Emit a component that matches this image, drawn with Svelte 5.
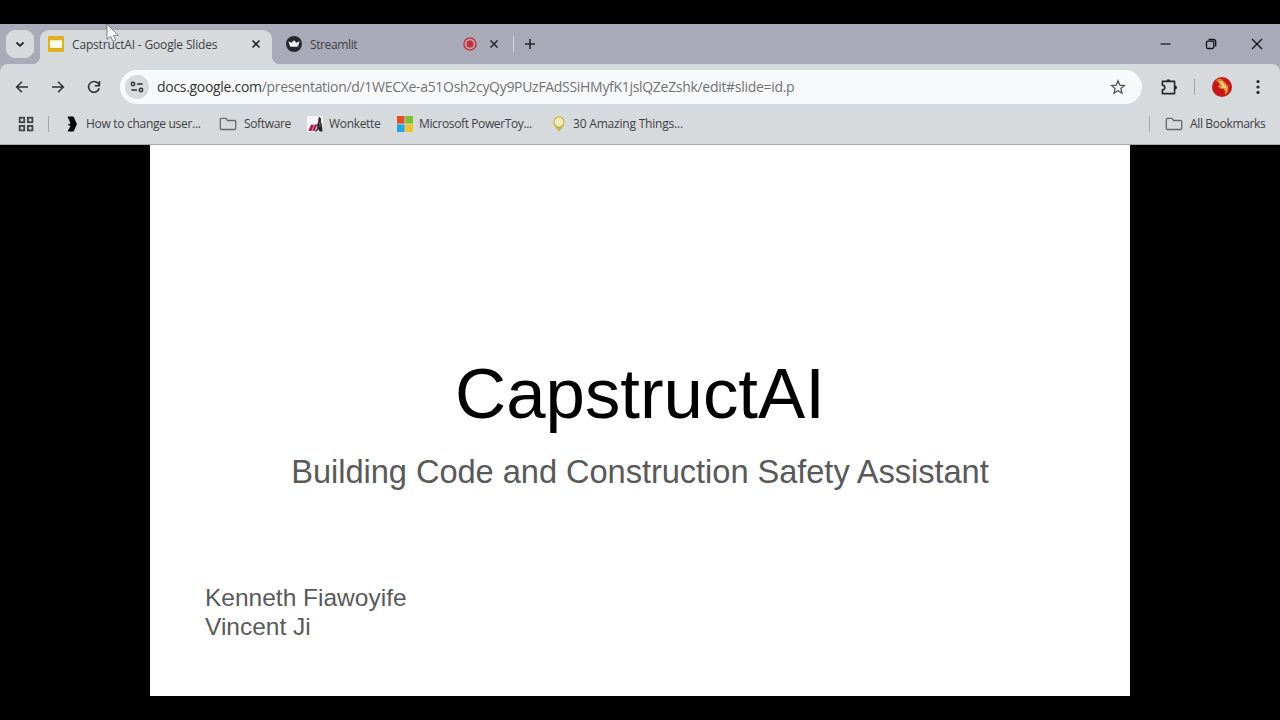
<script lang='ts'>
  const host = 'docs.google.com'
  const path = '/presentation/d/1WECXe-a51Osh2cyQy9PUzFAdSSiHMyfK1jslQZeZshk/edit#slide=id.p'

  const bookmarks = [
    { icon: 'chevron', label: 'How to change user...', width: 153, tracking: -0.29 },
    { icon: 'folder', label: 'Software', width: 88, tracking: -0.35 },
    { icon: 'wonkette', label: 'Wonkette', width: 90, tracking: -0.32 },
    { icon: 'microsoft', label: 'Microsoft PowerToy...', width: 156, tracking: -0.38 },
    { icon: 'pin', label: '30 Amazing Things...', width: 140, tracking: -0.2 }
  ]

  const authors = ['Kenneth Fiawoyife', 'Vincent Ji']
</script>

{#snippet folder()}
  <svg width='18' height='16' viewBox='0 0 18 16'>
    <path d='M2.5 2.4h4.3l1.8 2.1h6.9q1.2 0 1.2 1.2v6.6q0 1.2-1.2 1.2h-13q-1.2 0-1.2-1.2V3.6q0-1.2 1.2-1.2z' fill='none' stroke='#65686b' stroke-width='1.3' />
  </svg>
{/snippet}

{#snippet cross()}
  <svg width='12' height='12' viewBox='0 0 12 12'>
    <path d='M2.5 2.5l7 7m0-7l-7 7' stroke='#25282b' stroke-width='1.6' />
  </svg>
{/snippet}

<div class='screen'>
  <header class='tabs'>
    <div class='search-slot'>
      <button class='tab-search' aria-label='Search tabs'>
        <svg width='12' height='12' viewBox='0 0 12 12'><path d='M2.5 4.5l3.5 3.3 3.5-3.3' fill='none' stroke='#202326' stroke-width='1.8' /></svg>
      </button>
    </div>
    <div class='tab active'>
      <svg class='favicon' width='16' height='16' viewBox='0 0 16 16'>
        <rect width='16' height='16' rx='1.5' fill='#e2b01f' />
        <rect x='2' y='4.3' width='12' height='7.5' fill='#fffef0' />
      </svg>
      <span class='title'>CapstructAI - Google Slides</span>
      {@render cross()}
    </div>
    <div class='tab second'>
      <svg class='favicon' width='16' height='16' viewBox='0 0 16 16'>
        <circle cx='8' cy='8' r='8' fill='#242831' />
        <path d='M2.4 5.2l3.1 1.5L8 4.3l2.5 2.4 3.1-1.5-1.5 4.8q-.3.7-1 .7H4.9q-.7 0-1-.7z' fill='#eff0f1' />
      </svg>
      <span class='title'>Streamlit</span>
      <svg class='recording' width='14' height='14' viewBox='0 0 14 14'>
        <circle cx='7' cy='7' r='6.1' fill='none' stroke='#cf2836' stroke-width='1.3' />
        <circle cx='7' cy='7' r='3.5' fill='#cf2836' />
      </svg>
      {@render cross()}
    </div>
    <i class='rule light'></i>
    <svg class='new-tab' width='12' height='12' viewBox='0 0 12 12'><path d='M6 1v10M1 6h10' stroke='#25282b' stroke-width='1.6' /></svg>
    <div class='window-controls'>
      <svg width='12' height='12' viewBox='0 0 12 12'><path d='M1.5 6h10' stroke='#111' stroke-width='1.2' /></svg>
      <svg width='12' height='12' viewBox='0 0 12 12' fill='none' stroke='#111' stroke-width='1.3'>
        <rect x='1.5' y='3.2' width='7.3' height='7.3' rx='1.5' />
        <path d='M3.6 1.5h4.7q2.4 0 2.4 2.4v4.5' />
      </svg>
      <svg width='12' height='12' viewBox='0 0 12 12'><path d='M1 1l10 10M11 1L1 11' stroke='#111' stroke-width='1.3' /></svg>
    </div>
  </header>

  <div class='toolbar'>
    <nav class='navigation'>
      <svg width='16' height='16' viewBox='0 0 16 16'><path d='M14 8H3m5-5.3L2.7 8 8 13.3' fill='none' stroke='#303336' stroke-width='1.6' /></svg>
      <svg width='16' height='16' viewBox='0 0 16 16'><path d='M2 8h11M8 2.7L13.3 8 8 13.3' fill='none' stroke='#303336' stroke-width='1.6' /></svg>
      <svg width='16' height='16' viewBox='0 0 16 16'>
        <path d='M13.2 9.2A5.4 5.4 0 1 1 12 4.3l1.6 1.8' fill='none' stroke='#303336' stroke-width='1.6' />
        <path d='M13.4 1.9v4.8H8.8' fill='none' stroke='#303336' stroke-width='1.6' />
      </svg>
    </nav>
    <div class='address'>
      <span class='site-info'>
        <svg width='14' height='14' viewBox='0 0 14 14' fill='none' stroke='#303336' stroke-width='1.5'>
          <circle cx='3' cy='4' r='1.7' />
          <path d='M7 4h5.7M1.3 10H7' />
          <circle cx='11' cy='10' r='1.7' />
        </svg>
      </span>
      <span class='url'>{host}<span>{path}</span></span>
      <svg class='star' width='16' height='16' viewBox='0 0 16 16'>
        <path d='M8 1.8l1.8 4.3 4.7.4-3.6 3.1 1.1 4.5L8 11.7l-4 2.4 1.1-4.5-3.6-3.1 4.7-.4z' fill='none' stroke='#505356' stroke-width='1.3' />
      </svg>
    </div>
    <svg class='extensions' width='18' height='18' viewBox='0 0 18 18'>
      <path d='M2.4 3.4h12.2v12.2H2.4v-3.7q2.4-.2 2.4-2.4T2.4 7.1z' fill='none' stroke='#25282b' stroke-width='1.6' stroke-linejoin='round' />
      <path d='M6.5 3.2a2 2 0 0 1 4 0zM15 7.5a2 2 0 0 1 0 4z' fill='#25282b' />
    </svg>
    <i class='rule toolbar-rule'></i>
    <svg class='avatar' width='20' height='20' viewBox='0 0 20 20'>
      <circle cx='10' cy='10' r='10' fill='#c51619' />
      <path d='M4 3.2Q7 .6 10.4 2.6L13.5 6l3 3.3-.3 5.4-3 3.3q.2-4.3-2-6.2L8.8 12 6 9.6l1.8-2.3z' fill='#df812c' />
      <path d='M6.6 4l3.6.6 4.2 5.2.4 4.8-2.6-4-3.4.6 1.3-2.9z' fill='#f3d184' />
    </svg>
    <svg class='menu' width='4' height='16' viewBox='0 0 4 16' fill='#25282b'>
      <circle cx='2' cy='2.6' r='1.6' /><circle cx='2' cy='8' r='1.6' /><circle cx='2' cy='13.4' r='1.6' />
    </svg>
  </div>

  <div class='bookmarks'>
    <svg class='apps' width='16' height='16' viewBox='0 0 16 16' fill='none' stroke='#404346' stroke-width='1.8'>
      <rect x='1.7' y='1.7' width='4.5' height='4.5' /><rect x='9.9' y='1.7' width='4.5' height='4.5' />
      <rect x='1.7' y='9.9' width='4.5' height='4.5' /><rect x='9.9' y='9.9' width='4.5' height='4.5' />
    </svg>
    <i class='rule'></i>
    <div class='links'>
      {#each bookmarks as bookmark}
        <div class='bookmark {bookmark.icon}' style:width='{bookmark.width}px'>
          {#if bookmark.icon === 'folder'}
            {@render folder()}
          {:else if bookmark.icon === 'chevron'}
            <svg width='12' height='16' viewBox='0 0 12 16'><path d='M1.5.5h6L10.9 8l-3.2 7.5H1.5L4.5 10 1.5 8.7l3-1.2z' fill='#050505' /></svg>
          {:else if bookmark.icon === 'wonkette'}
            <svg width='16' height='16' viewBox='0 0 16 16'>
              <rect width='16' height='16' fill='#f4f3f5' />
              <path d='M4 8.7h3L4.4 15H1.4zM7.8 8.4h2.6l-2.6 6.4H5z' fill='#a91846' />
              <path d='M10.2 8.5l1-3 .2-3 1-1.7 1.6 1.7-.1 3.7 1 2.3.7 7h-3.2l-.7-2.2-2.2 2.2H7.6l2.6-3z' fill='#292529' />
              <path d='M12.3 6.5l.8 2.4-.3 2' stroke='#a69ca2' fill='none' stroke-width='.7' />
            </svg>
          {:else if bookmark.icon === 'microsoft'}
            <svg width='16' height='16' viewBox='0 0 16 16'>
              <path d='M0 0h7.6v7.6H0z' fill='#e34d2d' /><path d='M8.4 0H16v7.6H8.4z' fill='#79c32a' />
              <path d='M0 8.4h7.6V16H0z' fill='#25a6df' /><path d='M8.4 8.4H16V16H8.4z' fill='#edc52a' />
            </svg>
          {:else}
            <svg width='12' height='16' viewBox='0 0 12 16'>
              <path d='M6 .3a5.7 5.7 0 0 1 5.7 5.8Q11.7 9 9 12L6 15.8 3 12Q.3 9 .3 6.1A5.7 5.7 0 0 1 6 .3z' fill='#c1b947' />
              <circle cx='6' cy='6' r='4.4' fill='#f2edc5' />
              <path d='M3 4l2 1.5L7 3l2 2-2 3-2-1' fill='none' stroke='#e6dfa8' />
            </svg>
          {/if}
          <span style:letter-spacing='{bookmark.tracking}px'>{bookmark.label}</span>
        </div>
      {/each}
    </div>
    <i class='rule'></i>
    <div class='all'>{@render folder()}<span>All Bookmarks</span></div>
  </div>

  <main>
    <section class='slide'>
      <h1>CapstructAI</h1>
      <h2>Building Code and Construction Safety Assistant</h2>
      <div class='authors'>
        {#each authors as author}
          <p>{author}</p>
        {/each}
      </div>
    </section>
  </main>

  <svg class='cursor' width='14' height='20' viewBox='0 0 14 20'>
    <path d='M1 1v15.4l3.6-3.1 2.4 5 2.6-1.2-2.3-4.8h4.9z' fill='#fff' stroke='#65666c' stroke-width='.8' />
  </svg>
</div>

<style>
  :global(body) {
    background: #000;
    overflow: hidden;
  }
  .screen {
    position: relative;
    box-sizing: border-box;
    width: 1280px;
    height: 720px;
    padding-top: 24px;
    background: #000;
    color: #3d4043;
    font: 12px/16px 'Open Sans', 'Noto Sans', sans-serif;
  }
  svg {
    display: block;
    flex: none;
  }
  span {
    white-space: nowrap;
  }
  .tabs {
    display: flex;
    align-items: center;
    height: 40px;
    background: #a8abb7;
  }
  .search-slot {
    align-self: stretch;
    width: 40px;
    box-sizing: border-box;
    padding: 6px;
    background: radial-gradient(circle at 0 0, transparent 8px, #d7dadd 8.5px) right bottom / 8px 8px no-repeat;
  }
  .tab-search {
    display: grid;
    place-items: center;
    width: 28px;
    height: 28px;
    padding: 0;
    border: 0;
    border-radius: 9px;
    background: #d7dadd;
  }
  .tab {
    display: flex;
    align-items: center;
    box-sizing: border-box;
  }
  .favicon {
    margin-right: 8px;
  }
  .title {
    flex: 1;
    padding-top: 2px;
    letter-spacing: -.17px;
  }
  .active {
    align-self: flex-end;
    width: 232px;
    height: 34px;
    padding: 0 10px 6px 8px;
    border-radius: 9px 9px 0 0;
    background: #d7dadd;
  }
  .second {
    width: 240px;
    height: 40px;
    padding: 0 12px 0 14px;
    background: radial-gradient(circle at 100% 0, transparent 8px, #d7dadd 8.5px) left bottom / 8px 8px no-repeat;
  }
  .second .title {
    letter-spacing: -.38px;
  }
  .recording {
    margin-right: 11px;
  }
  .rule {
    width: 1px;
    height: 16px;
    background: #a4a6aa;
  }
  .light {
    margin-left: 1px;
    background: #d8dae0;
  }
  .new-tab {
    margin-left: 10px;
  }
  .window-controls {
    display: flex;
    gap: 34px;
    margin-left: auto;
    padding-right: 17px;
  }
  .toolbar {
    display: flex;
    align-items: center;
    box-sizing: border-box;
    height: 46px;
    padding: 0 20px 0 14px;
    border-radius: 8px 8px 0 0;
    background: #d7dadd;
    box-shadow: 0 -8px 0 #a8abb7;
  }
  .navigation {
    display: flex;
    gap: 20px;
    width: 106px;
  }
  .address {
    display: flex;
    align-items: center;
    box-sizing: border-box;
    width: 1022px;
    height: 34px;
    padding: 0 16px 0 5px;
    border-radius: 17px;
    background: #f8f9fa;
  }
  .site-info {
    display: grid;
    place-items: center;
    width: 24px;
    height: 24px;
    margin-right: 8px;
    border-radius: 50%;
    background: #d7dadd;
  }
  .url {
    color: #303336;
    font-size: 14px;
    letter-spacing: -.305px;
  }
  .url span {
    color: #707376;
  }
  .star {
    margin-left: auto;
  }
  .extensions {
    margin-left: 18px;
  }
  .toolbar-rule {
    margin-left: 16px;
  }
  .avatar {
    margin-left: 17px;
  }
  .menu {
    margin-left: auto;
  }
  .bookmarks {
    display: flex;
    align-items: center;
    box-sizing: border-box;
    height: 35px;
    padding: 0 14px 7px 18px;
    border-bottom: 1px solid #a9abad;
    background: #d7dadd;
  }
  .bookmarks span {
    padding-top: 1px;
  }
  .apps {
    margin-right: 14px;
  }
  .links {
    display: flex;
    flex: 1;
    margin-left: 17px;
  }
  .bookmark,
  .all {
    display: flex;
    align-items: center;
    gap: 6px;
  }
  .folder {
    gap: 7px;
  }
  .chevron,
  .pin {
    gap: 8px;
  }
  .all {
    gap: 7px;
    width: 101px;
    margin-left: 15px;
    letter-spacing: -.35px;
  }
  main {
    display: flex;
    justify-content: center;
    height: 551px;
  }
  .slide {
    box-sizing: border-box;
    width: 980px;
    height: 551px;
    padding-top: 208px;
    background: #fff;
    color: #595959;
    font-family: 'Liberation Sans', Arial, sans-serif;
    text-align: center;
  }
  h1,
  h2,
  p {
    margin: 0;
    font-weight: 400;
  }
  h1 {
    color: #000;
    font-size: 70.8px;
    line-height: 82px;
  }
  h2 {
    margin-top: 18px;
    font-size: 32.67px;
    line-height: 38px;
    letter-spacing: -.07px;
  }
  .authors {
    margin-top: 92px;
    padding-left: 55px;
    font-size: 24.5px;
    line-height: 29.4px;
    text-align: left;
  }
  .cursor {
    position: absolute;
    top: 23px;
    left: 106px;
  }
</style>
